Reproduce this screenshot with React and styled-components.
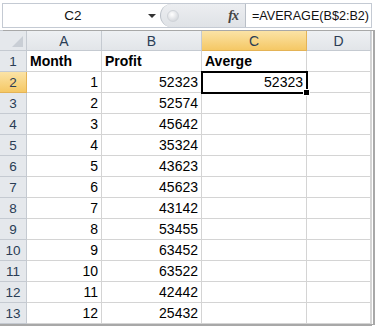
import React from "react";
import styled, { createGlobalStyle } from "styled-components";

const GlobalStyle = createGlobalStyle`
  html, body { margin: 0; padding: 0; background: #ffffff; }
  body { font-family: "Liberation Sans", Arial, sans-serif; }
`;

const months = [
  [1, 52323],
  [2, 52574],
  [3, 45642],
  [4, 35324],
  [5, 43623],
  [6, 45623],
  [7, 43142],
  [8, 53455],
  [9, 63452],
  [10, 63522],
  [11, 42442],
  [12, 25432],
];

const App = () => {
  return (
    <>
      <GlobalStyle />
      <Window>
        <FormulaBar>
          <NameBox>
            <span>C2</span>
            <Arrow />
          </NameBox>
          <Pill>
            <Knob />
            <Fx>fx</Fx>
          </Pill>
          <FormulaInput>=AVERAGE(B$2:B2)</FormulaInput>
        </FormulaBar>
        <Sheet>
          <Grid>
            <Corner />
            <ColHead>A</ColHead>
            <ColHead>B</ColHead>
            <ColHead $active>C</ColHead>
            <ColHead>D</ColHead>

            <RowHead>1</RowHead>
            <Cell $bold>Month</Cell>
            <Cell $bold>Profit</Cell>
            <Cell $bold>Averge</Cell>
            <Cell />

            {months.map(([m, p], i) => (
              <React.Fragment key={m}>
                <RowHead $active={i === 0}>{i + 2}</RowHead>
                <Cell $num>{m}</Cell>
                <Cell $num>{p}</Cell>
                {i === 0 ? (
                  <Cell $num $selected>
                    52323
                    <Handle />
                  </Cell>
                ) : (
                  <Cell />
                )}
                <Cell />
              </React.Fragment>
            ))}
          </Grid>
        </Sheet>
      </Window>
    </>
  );
};

export default App;

const Window = styled.div`
  width: 375px;
  height: 326px;
  overflow: hidden;
  background: #ffffff;
`;

const FormulaBar = styled.div`
  display: flex;
  height: 23px;
  margin-top: 3px;
  margin-left: 2px;
  margin-right: 3px;
  border: 1px solid #c4cad3;
  background: #ffffff;
`;

const NameBox = styled.div`
  position: relative;
  width: 157px;
  display: flex;
  align-items: center;
  font-size: 13.5px;
  color: #111;

  span {
    width: 140px;
    text-align: center;
  }
`;

const Arrow = styled.div`
  width: 0;
  height: 0;
  margin-left: 5px;
  border-left: 4px solid transparent;
  border-right: 4px solid transparent;
  border-top: 4px solid #333;
`;

const Pill = styled.div`
  width: 86px;
  display: flex;
  align-items: center;
  justify-content: space-between;
  padding: 0 7px 0 6px;
  box-sizing: border-box;
  border-radius: 12px 0 0 12px;
  border-left: 1px solid #b9bfc7;
  border-right: 1px solid #b9bfc7;
  background: linear-gradient(#eceef1, #dfe2e6);
`;

const Knob = styled.div`
  width: 10px;
  height: 10px;
  border-radius: 50%;
  background: radial-gradient(circle at 40% 35%, #ffffff, #c8ccd2);
  border: 1px solid #d0d4d9;
`;

const Fx = styled.span`
  font-family: "Liberation Serif", "Times New Roman", serif;
  font-style: italic;
  font-weight: bold;
  font-size: 14px;
  color: #444;
  letter-spacing: -1px;
`;

const FormulaInput = styled.div`
  flex: 1;
  display: flex;
  align-items: center;
  padding-left: 6px;
  font-size: 12.6px;
  color: #111;
  white-space: nowrap;
`;

const Sheet = styled.div`
  margin-top: 2px;
  width: 375px;
  border-top: 1px solid #c5cad1;
  box-sizing: border-box;
`;

const Grid = styled.div`
  display: grid;
  grid-template-columns: 27px 75px 100px 105px 64px;
  grid-template-rows: 20px repeat(13, 21px);
  width: 371px;
  border-right: 1px solid #d4d4d4;
  box-shadow: 1px 0 0 #ffffff, 4px 0 0 1px #a8a8a8, 0 5px 0 #a8a8a8;
`;

const Corner = styled.div`
  position: relative;
  background: #e5e8ec;
  border-right: 1px solid #c5cad1;
  border-bottom: 1px solid #c5cad1;

  &::after {
    content: "";
    position: absolute;
    right: 3px;
    bottom: 3px;
    border-left: 11px solid transparent;
    border-bottom: 11px solid #c9ced5;
  }
`;

const ColHead = styled.div`
  display: flex;
  align-items: center;
  justify-content: center;
  font-size: 14px;
  color: #2a3d55;
  background: ${(p) =>
    p.$active
      ? "linear-gradient(#fbe3a6, #f5c865)"
      : "linear-gradient(#eef0f3, #e2e5e9)"};
  border-right: 1px solid ${(p) => (p.$active ? "#e4b356" : "#c5cad1")};
  border-bottom: 1px solid ${(p) => (p.$active ? "#e4b356" : "#c5cad1")};
`;

const RowHead = styled.div`
  display: flex;
  align-items: center;
  justify-content: center;
  font-size: 13.5px;
  color: #2a3d55;
  background: ${(p) =>
    p.$active ? "linear-gradient(#fbe3a6, #f5c865)" : "#e5e8ec"};
  border-right: 1px solid ${(p) => (p.$active ? "#e4b356" : "#c5cad1")};
  border-bottom: 1px solid ${(p) => (p.$active ? "#e4b356" : "#c5cad1")};
`;

const Cell = styled.div`
  position: relative;
  display: flex;
  align-items: flex-end;
  justify-content: ${(p) => (p.$num ? "flex-end" : "flex-start")};
  padding: 0 3px 2px 3px;
  box-sizing: border-box;
  font-size: 14px;
  font-weight: ${(p) => (p.$bold ? "bold" : "normal")};
  color: #000;
  border-right: 1px solid #d4d4d4;
  border-bottom: 1px solid #d4d4d4;
  ${(p) =>
    p.$selected &&
    `
    outline: 2px solid #000;
    outline-offset: -1px;
    z-index: 1;
  `}
`;

const Handle = styled.div`
  position: absolute;
  right: -4px;
  bottom: -4px;
  width: 5px;
  height: 5px;
  background: #000;
  border: 1px solid #fff;
`;
